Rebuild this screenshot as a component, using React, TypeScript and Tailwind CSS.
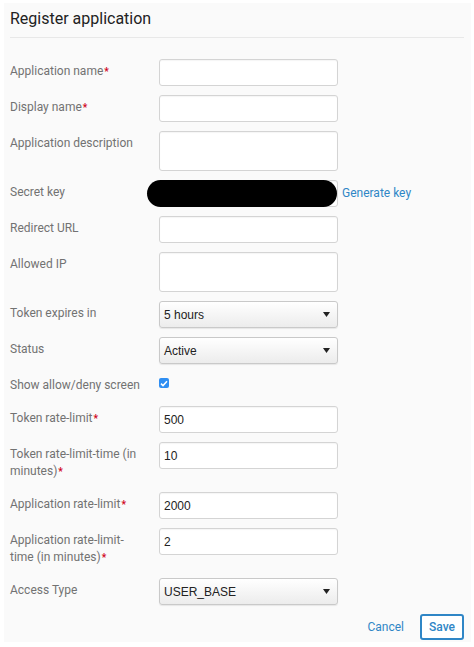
import { ReactNode } from 'react';

const label = "font-['Roboto',sans-serif] text-[12px] leading-[17px] text-[#727272]";
const field =
  "w-[179px] rounded-[3px] border border-[#d4d4d4] bg-white px-[4px] font-['Liberation_Sans',Arial,sans-serif] text-[12px] text-[#222] shadow-[inset_0_1px_1px_rgba(0,0,0,0.04)]";

function Req() {
  return <span className="ml-[1px] text-[10px] font-bold leading-none text-[#d0021b]">*</span>;
}

function Row({ name, required, children, last }: { name: string; required?: boolean; children: ReactNode; last?: boolean }) {
  return (
    <div className={`flex items-start ${last ? '' : 'mb-[9px]'}`}>
      <div className={`w-[149px] shrink-0 pr-[18px] pt-[4px] pb-[3px] ${label}`}>
        {name}
        {required && <Req />}
      </div>
      {children}
    </div>
  );
}

function TextInput({ value, tall }: { value?: string; tall?: boolean }) {
  return (
    <div className={`${field} ${tall ? 'h-[40px]' : 'h-[27px]'} flex items-center pl-[4px]`}>
      {value}
    </div>
  );
}

function Select({ value }: { value: string }) {
  return (
    <div className="flex h-[27px] w-[179px] items-center justify-between rounded-[3px] border border-[#c9c9c9] bg-gradient-to-b from-white to-[#ececec] pl-[4px] pr-[7px] font-['Liberation_Sans',Arial,sans-serif] text-[12px] text-[#222] shadow-[0_1px_1px_rgba(0,0,0,0.08)]">
      <span>{value}</span>
      <svg width="7" height="5" viewBox="0 0 7 5">
        <path d="M0 0h7L3.5 5z" fill="#222" />
      </svg>
    </div>
  );
}

export default function App() {
  return (
    <div className="min-h-[647px] bg-white pl-[4px] pr-[3px] pt-[3px] pb-[5px]">
      <div className="min-h-[639px] bg-[#fafafa] pl-[6px] pr-[7px]">
        <div className="border-b border-[#e8e8e8] pt-[6px] pb-[8px] font-['Roboto',sans-serif] text-[16px] leading-[20px] text-[#222]">
          Register application
        </div>

        <div className="pt-[21px]">
          <Row name="Application name" required>
            <TextInput />
          </Row>
          <Row name="Display name" required>
            <TextInput />
          </Row>
          <Row name="Application description">
            <TextInput tall />
          </Row>
          <Row name="Secret key">
            <div className="relative h-[27px] w-[179px]">
              <div className={`${field} h-[27px] bg-[#f0f0f0]`} />
              <div className="absolute left-[-12px] top-0 h-[27px] w-[190px] rounded-full bg-black" />
            </div>
            <span className="ml-[4px] pt-[5px] font-['Roboto',sans-serif] text-[12px] leading-[17px] text-[#2f86c6]">
              Generate key
            </span>
          </Row>
          <Row name="Redirect URL">
            <TextInput />
          </Row>
          <Row name="Allowed IP">
            <TextInput tall />
          </Row>
          <Row name="Token expires in">
            <Select value="5 hours" />
          </Row>
          <Row name="Status">
            <Select value="Active" />
          </Row>
          <Row name="Show allow/deny screen">
            <div className="mt-[5px] flex h-[10px] w-[10px] items-center justify-center rounded-[2px] bg-[#2f8ef2]">
              <svg width="8" height="7" viewBox="0 0 8 7">
                <path d="M1 3.6l2 2L7 1.2" stroke="white" strokeWidth="1.5" fill="none" />
              </svg>
            </div>
          </Row>
          <Row name="Token rate-limit" required>
            <TextInput value="500" />
          </Row>
          <Row name="Token rate-limit-time (in minutes)" required>
            <TextInput value="10" />
          </Row>
          <Row name="Application rate-limit" required>
            <TextInput value="2000" />
          </Row>
          <Row name="Application rate-limit-time (in minutes)" required>
            <TextInput value="2" />
          </Row>
          <Row name="Access Type" last>
            <Select value="USER_BASE" />
          </Row>
        </div>

        <div className="mt-[9px] flex items-center justify-end gap-[16px] pb-[2px] font-['Roboto',sans-serif] text-[12px]">
          <span className="text-[#2f86c6]">Cancel</span>
          <div className="flex h-[26px] w-[44px] items-center justify-center rounded-[3px] border-2 border-[#2f86c6] bg-white font-medium text-[#2f86c6]">
            Save
          </div>
        </div>
      </div>
    </div>
  );
}
